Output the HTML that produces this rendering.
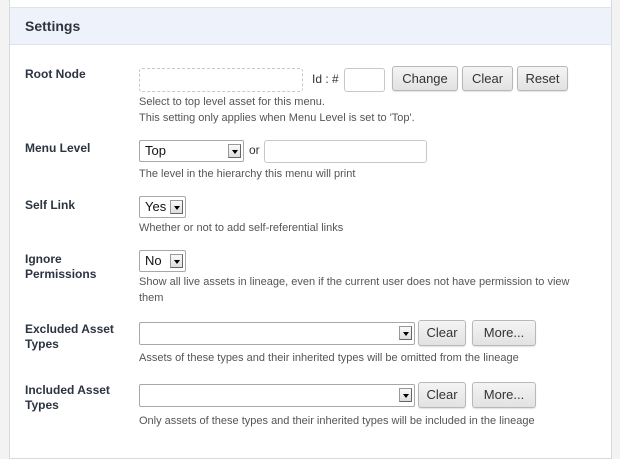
<!DOCTYPE html>
<html><head><style>
*{margin:0;padding:0;box-sizing:border-box}
body{width:620px;height:451px;background:#f3f3f3;font-family:"Liberation Sans",Arial,sans-serif;position:relative;overflow:hidden}
.panel{position:absolute;left:9px;top:-1px;width:603px;height:460px;background:#fff;border:1px solid #d6d9de}
.hdr{position:absolute;left:10px;top:7px;width:601px;height:38px;background:#eef3fb;border-top:1px solid #dde3ec;border-bottom:1px solid #dde3ec}
.hdr span{position:absolute;left:15px;top:10px;font-size:14px;font-weight:bold;color:#2b3440}
.a{position:absolute}
.lbl{position:absolute;left:25px;font-size:12px;font-weight:bold;color:#2b3440;line-height:15px}
.help{position:absolute;left:139px;font-size:11px;color:#555;line-height:16px}
.inp{position:absolute;border:1px solid #c8c8c8;border-radius:3px;background:#fff}
.btn{position:absolute;border:1px solid #b8b8b8;border-radius:3px;background:linear-gradient(#f4f4f4,#e2e2e2);font-size:13px;color:#333;text-align:center;box-shadow:0 1px 1px rgba(0,0,0,.12)}
.sel{position:absolute;border:1px solid #a8a8a8;border-radius:2px;background:#fff;font-size:13px;color:#111;padding-left:5px}
.sel i{position:absolute;right:2px;top:3px;width:13px;height:14px;background:linear-gradient(#fafafa,#ddd);border:1px solid #999;border-right-color:#666;border-bottom-color:#666}
.sel i:after{content:"";position:absolute;left:3px;top:5px;border-left:3px solid transparent;border-right:3px solid transparent;border-top:4px solid #000}
</style></head><body>
<div class="panel"></div>
<div class="hdr"><span>Settings</span></div>

<div class="lbl" style="top:67px">Root Node</div>
<div class="a" style="left:139px;top:68px;width:164px;height:24px;border:1px dashed #c8c8c8;border-radius:3px"></div>
<div class="a" style="left:312px;top:72px;font-size:12px;color:#333">Id : #</div>
<div class="inp" style="left:344px;top:68px;width:41px;height:24px"></div>
<div class="btn" style="left:392px;top:66px;width:66px;height:25px;line-height:23px">Change</div>
<div class="btn" style="left:462px;top:66px;width:51px;height:25px;line-height:23px">Clear</div>
<div class="btn" style="left:517px;top:66px;width:51px;height:25px;line-height:23px">Reset</div>
<div class="help" style="top:94px">Select to top level asset for this menu.<br>This setting only applies when Menu Level is set to 'Top'.</div>

<div class="lbl" style="top:141px">Menu Level</div>
<div class="sel" style="left:139px;top:140px;width:105px;height:22px;line-height:20px">Top<i></i></div>
<div class="a" style="left:249px;top:143px;font-size:12px;color:#333">or</div>
<div class="inp" style="left:264px;top:140px;width:163px;height:23px"></div>
<div class="help" style="top:166px">The level in the hierarchy this menu will print</div>

<div class="lbl" style="top:198px">Self Link</div>
<div class="sel" style="left:139px;top:196px;width:47px;height:22px;line-height:20px">Yes<i></i></div>
<div class="help" style="top:220px">Whether or not to add self-referential links</div>

<div class="lbl" style="top:252px">Ignore<br>Permissions</div>
<div class="sel" style="left:139px;top:250px;width:47px;height:22px;line-height:20px">No<i></i></div>
<div class="help" style="top:274px">Show all live assets in lineage, even if the current user does not have permission to view<br>them</div>

<div class="lbl" style="top:322px">Excluded Asset<br>Types</div>
<div class="sel" style="left:139px;top:322px;width:276px;height:23px"><i></i></div>
<div class="btn" style="left:418px;top:320px;width:48px;height:26px;line-height:24px">Clear</div>
<div class="btn" style="left:472px;top:320px;width:64px;height:26px;line-height:24px">More...</div>
<div class="help" style="top:350px">Assets of these types and their inherited types will be omitted from the lineage</div>

<div class="lbl" style="top:383px">Included Asset<br>Types</div>
<div class="sel" style="left:139px;top:384px;width:276px;height:23px"><i></i></div>
<div class="btn" style="left:418px;top:382px;width:48px;height:26px;line-height:24px">Clear</div>
<div class="btn" style="left:472px;top:382px;width:64px;height:26px;line-height:24px">More...</div>
<div class="help" style="top:413px">Only assets of these types and their inherited types will be included in the lineage</div>
</body></html>
